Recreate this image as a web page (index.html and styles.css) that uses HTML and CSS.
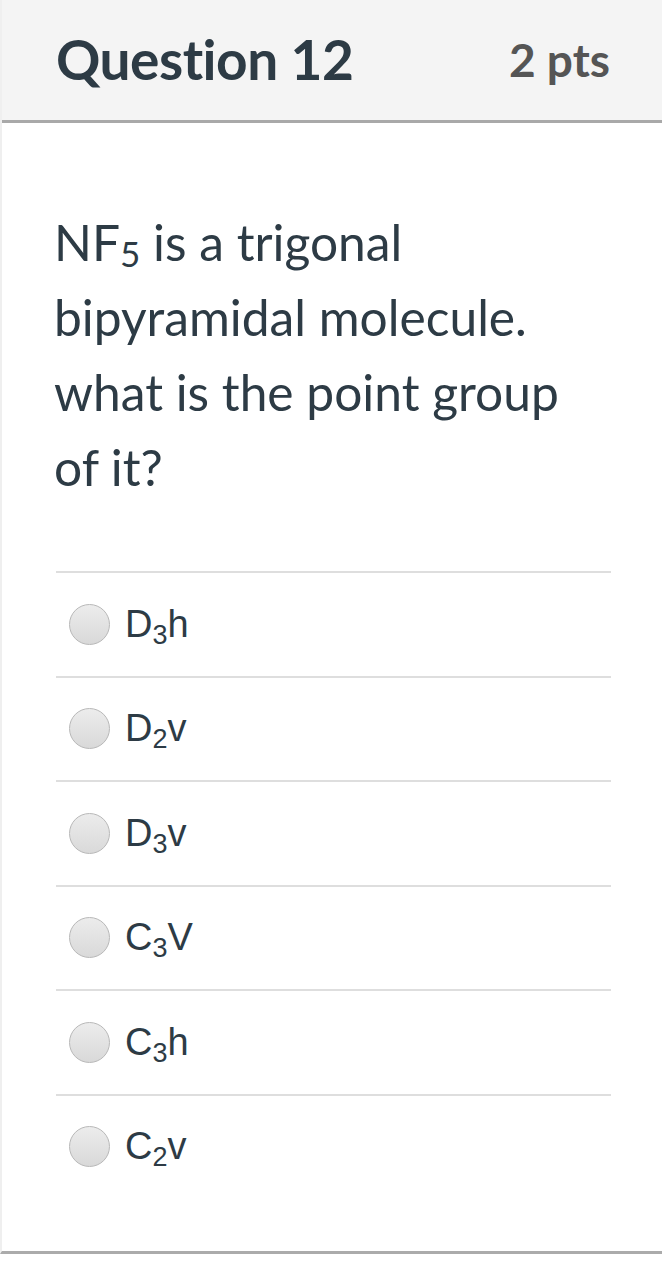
FILE: index.html
```html
<!DOCTYPE html>
<html>
<head>
<meta charset="utf-8">
<link rel="stylesheet" href="styles.css">
</head>
<body>
<div class="card">
  <div class="header">
    <h2 class="title">Question 12</h2>
    <span class="pts">2 pts</span>
  </div>
  <div class="content">
    <p class="question">NF<sub>5</sub> is a trigonal bipyramidal molecule. what is the point group of it?</p>
    <div class="answers">
      <div class="answer"><span class="radio"></span><span class="label">D<sub>3</sub>h</span></div>
      <div class="answer"><span class="radio"></span><span class="label">D<sub>2</sub>v</span></div>
      <div class="answer"><span class="radio"></span><span class="label">D<sub>3</sub>v</span></div>
      <div class="answer"><span class="radio"></span><span class="label">C<sub>3</sub>V</span></div>
      <div class="answer"><span class="radio"></span><span class="label">C<sub>3</sub>h</span></div>
      <div class="answer"><span class="radio"></span><span class="label">C<sub>2</sub>v</span></div>
    </div>
  </div>
</div>
</body>
</html>
```
FILE: styles.css
```css
html, body {
  margin: 0;
  padding: 0;
  background: #fff;
}
.card {
  width: 662px;
  height: 1254px;
  box-sizing: border-box;
  border-left: 2px solid #efefef;
  border-bottom: 3px solid #ababab;
  font-family: Lato, "Open Sans", sans-serif;
  color: #2d3b45;
}
.header {
  height: 123px;
  box-sizing: border-box;
  background: #f4f4f4;
  border-bottom: 3px solid #a9a9a9;
  display: flex;
  align-items: center;
  justify-content: space-between;
  padding: 0 52px 2px 54px;
}
.title {
  margin: 0;
  font-size: 55px;
  font-weight: 700;
  color: #2d3b45;
  letter-spacing: -0.5px;
}
.pts {
  font-size: 46px;
  font-weight: 700;
  color: #555;
}
.content {
  padding: 82px 51px 0 52px;
}
.question {
  margin: 0;
  font-size: 49.7px;
  line-height: 75px;
  width: 560px;
}
.question sub {
  font-size: 35px;
  vertical-align: -6px;
  line-height: 0;
}
.answers {
  margin-top: 66px;
  margin-left: 2px;
}
.answer {
  height: 104.5px;
  box-sizing: border-box;
  border-top: 2px solid #dedede;
  display: flex;
  align-items: center;
  padding-left: 13px;
}
.radio {
  width: 41px;
  height: 41px;
  box-sizing: border-box;
  border-radius: 50%;
  border: 1.5px solid #b8b8b8;
  background: linear-gradient(#ececec, #d9d9d9);
  margin-right: 15px;
  flex: none;
}
.label {
  font-family: "Liberation Sans", Arial, sans-serif;
  font-size: 38px;
  color: #2d3b45;
}
.label sub {
  font-size: 27px;
  vertical-align: -7px;
  line-height: 0;
}
```
